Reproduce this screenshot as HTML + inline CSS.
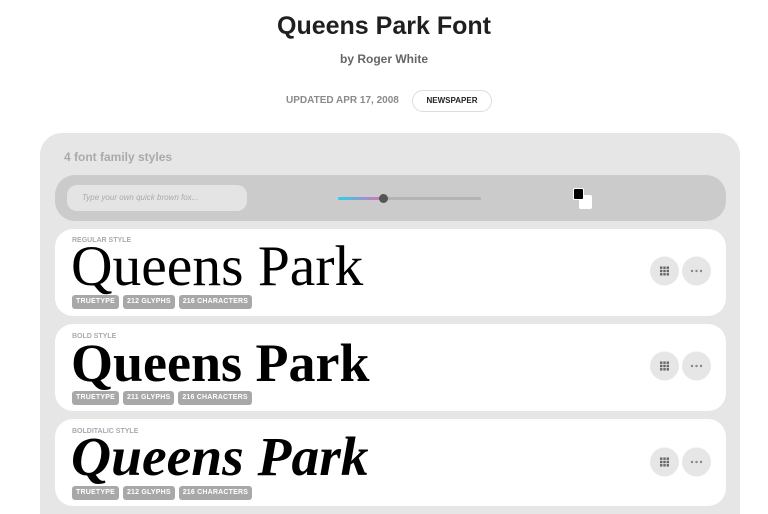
<!DOCTYPE html>
<html><head><style>
*{margin:0;padding:0;box-sizing:border-box}
html,body{width:768px;height:514px;overflow:hidden}
body{background:#fff;font-family:"Liberation Sans",sans-serif;position:relative}
.a{position:absolute}
h1{position:absolute;top:12px;left:0;width:768px;text-align:center;font-size:25px;font-weight:bold;color:#1f1f22}
.by{top:52px;left:0;width:768px;text-align:center;font-size:12px;font-weight:bold;color:#666}
.upd{left:286px;top:95px;font-size:10px;font-weight:bold;color:#8a8a8a}
.np{left:412px;top:90px;width:80px;height:22px;border:1px solid #ddd;border-radius:11px;font-size:8px;font-weight:bold;text-align:center;line-height:20px;color:#222}
.box{left:40px;top:133px;width:700px;height:381px;background:#e6e6e6;border-radius:22px 22px 0 0}
.cnt{left:64px;top:150px;font-size:12px;font-weight:bold;color:#aaa}
.tb{left:55px;top:175px;width:671px;height:46px;background:#cbcbcb;border-radius:20px}
.inp{left:67px;top:185px;width:180px;height:26px;background:#e4e4e4;border-radius:10px;font-size:8px;font-style:italic;color:#aaa;padding:8px 0 0 15px}
.card{left:55px;width:671px;height:87px;background:#fff;border-radius:18px}
.lab{font-size:7px;font-weight:bold;color:#a9a9b2;left:72px}
.s{left:71px;font-family:"Liberation Serif",serif;font-size:54px;color:#000;white-space:nowrap;line-height:1}
.tags{left:72px;display:flex;gap:4px}
.tags span{background:#a8a8a8;color:#fff;font-size:7px;font-weight:bold;padding:3px 4px;border-radius:3px;height:14px;letter-spacing:0.2px}
</style></head><body>
<h1>Queens Park Font</h1>
<div class="a by">by Roger White</div>
<div class="a upd">UPDATED APR 17, 2008</div>
<div class="a np">NEWSPAPER</div>
<div class="a box"></div>
<div class="a cnt">4 font family styles</div>
<div class="a tb"></div>
<div class="a inp">Type your own quick brown fox...</div>
<div class="a" style="left:338px;top:197px;width:143px;height:3px;background:#b3b3b3;border-radius:2px"></div>
<div class="a" style="left:338px;top:197px;width:46px;height:3px;background:linear-gradient(90deg,#2ad0ef,#e86ab8);border-radius:2px"></div>
<div class="a" style="left:379px;top:194px;width:9px;height:9px;background:#555;border-radius:50%"></div>
<div class="a" style="left:579px;top:195px;width:13px;height:14px;background:#fff;border-radius:2px"></div>
<div class="a" style="left:573px;top:188px;width:11px;height:12px;background:#000;border:1.5px solid #fff;border-radius:2px"></div>

<div class="a card" style="top:229px"></div>
<div class="a lab" style="top:237px">REGULAR STYLE</div>
<div class="a s" style="top:238px;font-size:57.5px">Queens Park</div>
<div class="a tags" style="top:295px"><span>TRUETYPE</span><span>212 GLYPHS</span><span>216 CHARACTERS</span></div>

<div class="a card" style="top:324px"></div>
<div class="a lab" style="top:333px">BOLD STYLE</div>
<div class="a s" style="top:336px;font-weight:bold">Queens Park</div>
<div class="a tags" style="top:391px"><span>TRUETYPE</span><span>211 GLYPHS</span><span>216 CHARACTERS</span></div>

<div class="a card" style="top:419px"></div>
<div class="a lab" style="top:428px">BOLDITALIC STYLE</div>
<div class="a s" style="top:430px;font-weight:bold;font-style:italic;font-size:55.5px">Queens Park</div>
<div class="a tags" style="top:486px"><span>TRUETYPE</span><span>212 GLYPHS</span><span>216 CHARACTERS</span></div>

<svg class="a" style="left:0;top:0" width="768" height="514">
<g id="b1">
<circle cx="664.5" cy="271" r="14.5" fill="#e6e6e6"/><circle cx="696.5" cy="271" r="14.5" fill="#e6e6e6"/>
<g fill="#666"><rect x="660" y="266.5" width="2.4" height="2.4"/><rect x="663.3" y="266.5" width="2.4" height="2.4"/><rect x="666.6" y="266.5" width="2.4" height="2.4"/><rect x="660" y="269.8" width="2.4" height="2.4"/><rect x="663.3" y="269.8" width="2.4" height="2.4"/><rect x="666.6" y="269.8" width="2.4" height="2.4"/><rect x="660" y="273.1" width="2.4" height="2.4"/><rect x="663.3" y="273.1" width="2.4" height="2.4"/><rect x="666.6" y="273.1" width="2.4" height="2.4"/></g>
<g fill="#888"><circle cx="692" cy="271" r="1.2"/><circle cx="696.5" cy="271" r="1.2"/><circle cx="701" cy="271" r="1.2"/></g>
</g>
<use href="#b1" y="95"/>
<use href="#b1" y="191"/>
</svg>
</body></html>
